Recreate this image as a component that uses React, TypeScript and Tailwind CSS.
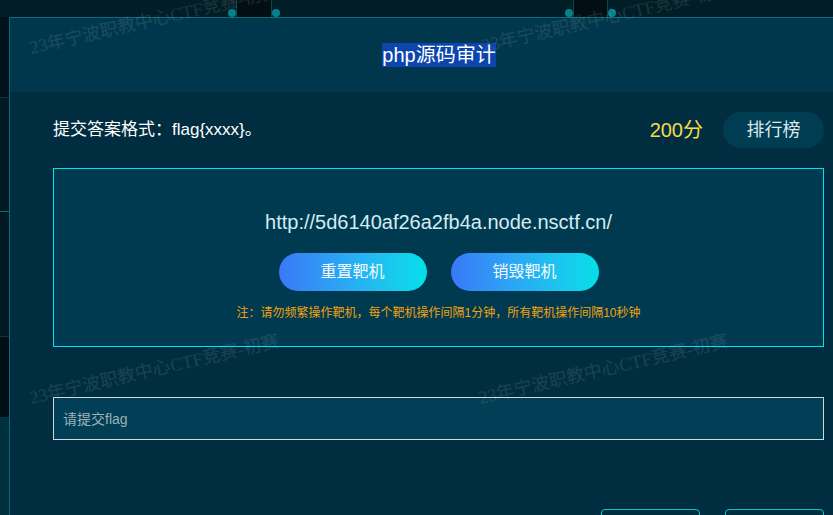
const WATERMARK = "23年宁波职教中心CTF竞赛-初赛";

const marks = [
  { left: 32, top: 39 },
  { left: 484, top: 37 },
  { left: 32, top: 389 },
  { left: 481, top: 389 },
];

const Dot = () => <div className="w-[8px] h-[8px] rounded-full bg-[#06828d] shrink-0" />;

const TopStrip = () => {
  return (
    <div className="h-[17px] flex items-end">
      <div className="w-[228px] shrink-0" />
      <Dot />
      <div className="w-[36px] h-full bg-[#010f14] border-x border-[#0a4650] shrink-0" />
      <Dot />
      <div className="w-[285px] shrink-0" />
      <Dot />
      <div className="w-[35px] h-full bg-[#010f14] border-x border-[#0a4650] shrink-0" />
      <Dot />
    </div>
  );
};

const LeftStrip = () => {
  return (
    <div className="w-[9px] shrink-0 flex flex-col">
      <div className="h-[81px] shrink-0 bg-[#01121a] border-b border-[#0a3540]" />
      <div className="h-[114px] shrink-0 bg-[#011a22] border-b border-[#0a6d7a]" />
      <div className="h-[125px] shrink-0 bg-[#011820] border-b border-[#0a3540]" />
      <div className="h-[81px] shrink-0 bg-[#010f15] border-b border-[#0a3540]" />
      <div className="flex-1 bg-[#002f3e]" />
    </div>
  );
};

const GradientButton = ({ label }: { label: string }) => {
  return (
    <button className="w-[148px] h-[38px] rounded-full bg-gradient-to-r from-[#3a78f8] to-[#02e0e8] text-[#f2fbff] text-[16px] leading-none">
      {label}
    </button>
  );
};

export default function App() {
  return (
    <div className="relative w-[833px] h-[515px] overflow-hidden bg-[#011d26] font-['Liberation_Sans','Noto_Sans_CJK_SC',sans-serif]">
      <TopStrip />
      <div className="flex h-[498px]">
        <LeftStrip />
        <div className="w-[859px] shrink-0 border-l border-t border-[#0b6b7a] bg-[#002d40] flex flex-col">
          <div className="h-[74px] shrink-0 bg-[#00374c] flex items-center justify-center">
            <span className="bg-[#0b45ad] text-white text-[20px] leading-[24px]">php源码审计</span>
          </div>

          <div className="shrink-0 pl-[43px] pr-[44px] flex flex-col">
            <div className="mt-[20px] h-[36px] shrink-0 flex items-center justify-between">
              <p className="text-white text-[17px]">提交答案格式：flag{"{xxxx}"}。</p>
              <div className="flex items-center gap-[20px]">
                <span className="text-[#f6dc4b] text-[20px]">200分</span>
                <button className="w-[101px] h-[36px] rounded-full bg-[#003d52] text-[#dbe9ee] text-[18px]">
                  排行榜
                </button>
              </div>
            </div>

            <div className="mt-[20px] h-[179px] shrink-0 border border-[#00e3ea] bg-[#003a50] flex flex-col items-center pt-[41px]">
              <p className="text-[#d4ecf2] text-[20px] leading-[24px]">http://5d6140af26a2fb4a.node.nsctf.cn/</p>
              <div className="mt-[19px] flex gap-[24px]">
                <GradientButton label="重置靶机" />
                <GradientButton label="销毁靶机" />
              </div>
              <p className="mt-[14px] text-[#f0a30c] text-[12px] leading-[16px]">
                注：请勿频繁操作靶机，每个靶机操作间隔1分钟，所有靶机操作间隔10秒钟
              </p>
            </div>

            <input
              placeholder="请提交flag"
              className="mt-[50px] h-[43px] shrink-0 border border-[#d0d8dc] bg-[#003f55] pl-[9px] text-[14px] text-white placeholder:text-[#9fb2ba] outline-none"
            />

            <div className="mt-[69px] shrink-0 flex justify-end gap-[25px]">
              <button className="w-[99px] h-[36px] rounded-[4px] border border-[#00c8d2]" />
              <button className="w-[99px] h-[36px] rounded-[4px] border border-[#00c8d2]" />
            </div>
          </div>
        </div>
      </div>

      {marks.map((m, i) => (
        <span
          key={i}
          className="pointer-events-none absolute whitespace-nowrap origin-bottom-left rotate-[-13deg] text-[18px] leading-[18px] text-white/10 font-['Liberation_Serif','Noto_Sans_CJK_SC',serif]"
          style={{ left: m.left, top: m.top }}
        >
          {WATERMARK}
        </span>
      ))}
    </div>
  );
}
